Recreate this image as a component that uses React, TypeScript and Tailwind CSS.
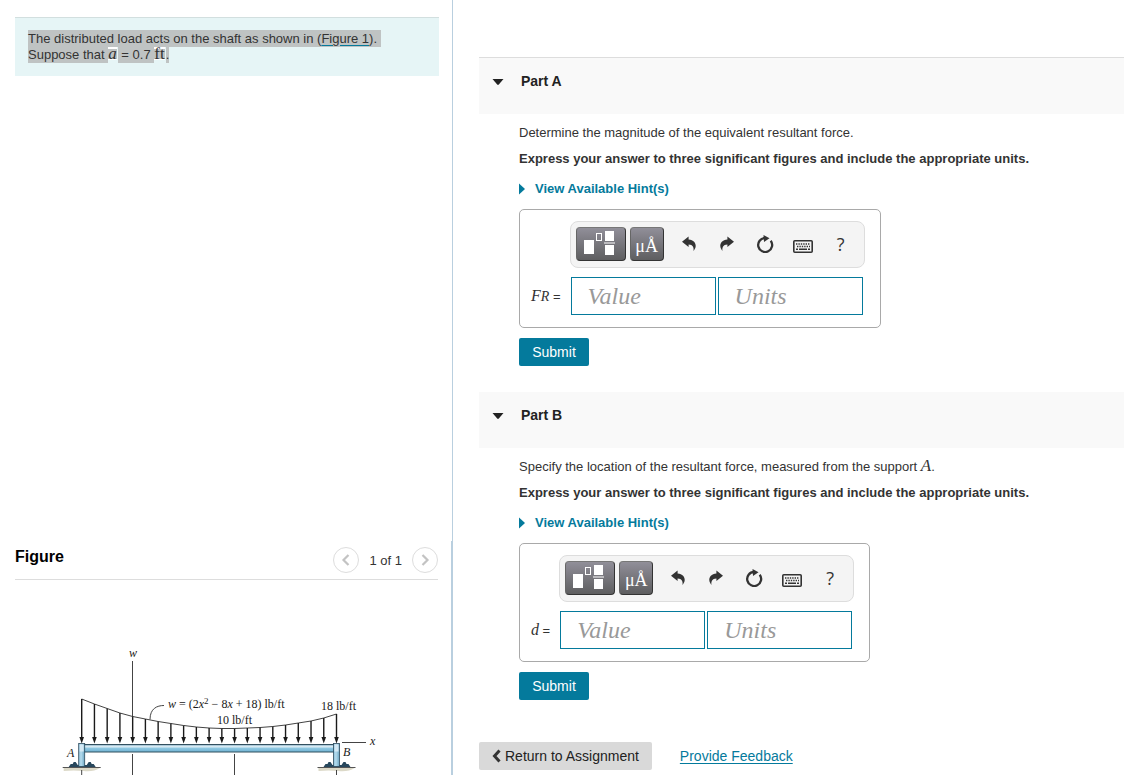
import { ReactNode } from "react";
import clsx from "clsx";

const SERIF = "font-['Liberation_Serif','Times_New_Roman',serif]";

function Marked({ children }: { children: ReactNode }) {
  return <span className="bg-[#bfc3c3] py-px">{children}</span>;
}

function MathMarked({ children }: { children: ReactNode }) {
  return (
    <span
      className={clsx(
        "mr-px inline-block border-t-2 border-b border-white bg-[#bfc3c3] text-[17px] leading-[10px]",
        SERIF
      )}
    >
      {children}
    </span>
  );
}

function Problem() {
  return (
    <section className="mt-[17px] mr-[13px] ml-[15px] h-[59px] border-t border-[#d2dfdf] bg-[#e6f5f6] px-[13px] pt-[13px] text-[13px] leading-4 text-[#333]">
      <p>
        <Marked>
          The distributed load acts on the shaft as shown in (
          <a href="#figure" className="underline decoration-[#047a9c] underline-offset-2">
            Figure 1
          </a>
          ).&nbsp;
        </Marked>
      </p>
      <p>
        <Marked>Suppose that </Marked>
        <MathMarked>
          <i>a</i>
        </MathMarked>
        <Marked> = 0.7 </Marked>
        <MathMarked>ft</MathMarked>
        <Marked>.</Marked>
      </p>
    </section>
  );
}

// top of every load arrow, left support to right support
const loadTops = [
  699, 704, 708.5, 713, 716.5, 719, 721.5, 723.5, 725.5, 727, 728, 728.5, 728.5,
  728, 727.5, 726.5, 725, 723, 721, 718, 714,
];
const loads = loadTops.map((y, i) => ({ x: 81.7 + i * 12.74, y }));

function Support({ x }: { x: number }) {
  return (
    <g>
      <path d={`M${x - 18} 768h36q-6 4-16 3t-20 0z`} fill="#dcd9c8" />
      <path
        d={`M${x - 13} 767l2-3h2l1-2h2l2 3h9l2-3h2l1 2h2l2 3z`}
        fill="#27475c"
      />
      <path d={`M${x - 19} 767.5h38`} stroke="#555" strokeWidth="1" />
      <rect x={x - 3} y="743.5" width="6" height="23" fill="url(#post)" stroke="#2c4a5c" strokeWidth="0.8" />
      <rect x={x - 2} y="744.5" width="4" height="7" fill="#d5e9f4" />
      <path d={`M${x} 770v5`} stroke="#444" strokeWidth="1" />
    </g>
  );
}

function BeamDiagram() {
  return (
    <svg
      viewBox="15 580 420 195"
      className="block h-[195px] w-[420px]"
      fontFamily="'Liberation Serif', serif"
      fontSize="12"
      fill="#1a1a1a"
    >
      <defs>
        <linearGradient id="beam" x1="0" y1="0" x2="0" y2="1">
          <stop offset="0" stopColor="#7fa9bf" />
          <stop offset="0.3" stopColor="#e3f2f9" />
          <stop offset="0.5" stopColor="#8fc8e2" />
          <stop offset="1" stopColor="#6fb2d2" />
        </linearGradient>
        <linearGradient id="post">
          <stop offset="0" stopColor="#8abdd6" />
          <stop offset="0.4" stopColor="#b5dcee" />
          <stop offset="1" stopColor="#6ba5c2" />
        </linearGradient>
      </defs>
      <g stroke="#444" strokeWidth="1" fill="none">
        <path d="M132.5 661v56M132.5 754v21M234.5 754v21M342 742.5h24" />
        <path d="M164 705.5c-7 0-14 3-14 14" />
        <polyline points={loads.map((p) => `${p.x},${p.y}`).join(" ")} />
      </g>
      {loads.map((p) => (
        <g key={p.x}>
          <path d={`M${p.x} ${p.y}V739`} stroke="#1a1a1a" strokeWidth="1.4" />
          <path d={`M${p.x - 2.3} 737h4.6l-2.3 6.5z`} />
        </g>
      ))}
      <rect x="82" y="744.5" width="254" height="7.5" fill="url(#beam)" stroke="#33505f" strokeWidth="1" />
      <Support x={81.7} />
      <Support x={336.5} />
      <text x="129" y="657" fontStyle="italic">w</text>
      <text x="168" y="708">
        <tspan fontStyle="italic">w</tspan> = (2<tspan fontStyle="italic">x</tspan>
        <tspan fontSize="9" dy="-4">2</tspan>
        <tspan dy="4"> − 8</tspan>
        <tspan fontStyle="italic">x</tspan> + 18) lb/ft
      </text>
      <text x="321" y="710">18 lb/ft</text>
      <text x="217" y="724">10 lb/ft</text>
      <text x="67" y="757" fontStyle="italic">A</text>
      <text x="343" y="756" fontStyle="italic">B</text>
      <text x="370" y="745" fontStyle="italic">x</text>
    </svg>
  );
}

function PagerButton({ label, d }: { label: string; d: string }) {
  return (
    <button
      aria-label={label}
      className="flex size-[26px] items-center justify-center rounded-full border border-[#ddd]"
    >
      <svg viewBox="0 0 10 14" className="h-[14px] w-[10px]" fill="none" stroke="#c3c3c3" strokeWidth="2.2">
        <path d={d} />
      </svg>
    </button>
  );
}

function Figure() {
  return (
    <section id="figure" className="border-r border-[#b9cfdf] pt-[6px] pr-[13px] pl-[15px]">
      <div className="flex h-[33px] items-start justify-between border-b border-[#ddd]">
        <h2 className="text-base leading-5 font-bold text-black">Figure</h2>
        <div className="flex items-center gap-[10px] text-[13px] text-[#333]">
          <PagerButton label="Previous figure" d="M7.5 2L2.5 7l5 5" />
          <span className="pt-[2px]">1 of 1</span>
          <PagerButton label="Next figure" d="M2.5 2l5 5l-5 5" />
        </div>
      </div>
      <BeamDiagram />
    </section>
  );
}

function ArrowIcon({ flip }: { flip?: boolean }) {
  return (
    <svg viewBox="0 0 14 16" className={clsx("h-4 w-[14px]", flip && "-scale-x-100")} fill="#333">
      <path d="M0 5.7L6.6.5v3C11.5 4 14 7 13.7 10.3c-.2 2-1.2 3.4-2.200 4.700C12 11.500 11 8.700 6.600 8.500v2.500z" />
    </svg>
  );
}

function ResetIcon() {
  return (
    <svg viewBox="0 0 18 18" className="size-[18px]" fill="none">
      <path d="M9 3a7 7 0 1 0 5.7 2.7" stroke="#333" strokeWidth="2.3" />
      <path d="M7.5 0l6 3.2l-5.5 3.8z" fill="#333" />
    </svg>
  );
}

function KeyboardIcon() {
  return (
    <svg viewBox="0 0 20 13" className="h-[13px] w-5" fill="none" stroke="#333">
      <rect x="0.8" y="0.8" width="18.4" height="11.4" rx="1" strokeWidth="1.6" />
      <path d="M3 4h14M4 6.5h13" strokeWidth="1.5" strokeDasharray="1.4 1" />
      <path d="M3 9.3h2M6 9.3h8M15 9.3h2" strokeWidth="1.5" />
    </svg>
  );
}

function TemplatesIcon() {
  return (
    <svg viewBox="0 0 32 26" className="h-[26px] w-8" fill="#fff">
      <rect x="1" y="10" width="10" height="14" />
      <rect x="13.5" y="3.5" width="5" height="7" fill="none" stroke="#fff" />
      <rect x="22" y="1" width="9" height="10" />
      <rect x="21" y="12.5" width="11" height="1" />
      <rect x="22" y="15" width="9" height="10" />
    </svg>
  );
}

const darkButton =
  "flex h-[34px] shrink-0 items-center justify-center rounded border border-t-[#777] border-l-[#666] border-r-[#333] border-b-[#333] bg-linear-to-b from-[#918f99] to-[#5e5e60] text-white";
const toolButton = "flex h-[34px] w-[38px] shrink-0 items-center justify-center text-[#333]";

function Toolbar() {
  return (
    <div className="flex h-[47px] w-[295px] items-start rounded-lg border border-[#ddd] bg-[#f4f4f4] pt-[5px] pr-1 pl-[5px]">
      <button aria-label="Templates" className={clsx(darkButton, "mr-1 w-[50px] pr-1 pb-[2px]")}>
        <TemplatesIcon />
      </button>
      <button
        aria-label="Symbols"
        className={clsx(darkButton, "mr-[6px] w-[34px] pt-1 text-[18px]", SERIF)}
      >
        μÅ
      </button>
      <button aria-label="Undo" className={toolButton}>
        <ArrowIcon />
      </button>
      <button aria-label="Redo" className={toolButton}>
        <ArrowIcon flip />
      </button>
      <button aria-label="Reset" className={toolButton}>
        <ResetIcon />
      </button>
      <button aria-label="Keyboard shortcuts" className={clsx(toolButton, "pt-1")}>
        <KeyboardIcon />
      </button>
      <button aria-label="Help" className={clsx(toolButton, "font-['Open_Sans',sans-serif] text-lg")}>
        ?
      </button>
    </div>
  );
}

function AnswerBox({ id, label }: { id: string; label: ReactNode }) {
  const field = clsx(
    "h-[38px] w-[145px] border border-[#047a9c] bg-white px-4 text-2xl italic outline-none placeholder:text-[#999]",
    SERIF
  );
  return (
    <div className="grid w-fit grid-cols-[auto_auto] gap-x-[9px] gap-y-[9px] rounded-[5px] border border-[#a9a9a9] pt-[11px] pr-[15px] pb-3 pl-[11px]">
      <div className="col-start-2">
        <Toolbar />
      </div>
      <label htmlFor={`${id}-value`} className="self-center text-[13px] text-[#333]">
        {label} =
      </label>
      <div className="flex gap-[2px] pl-px">
        <input id={`${id}-value`} placeholder="Value" className={field} />
        <input aria-label="Units" placeholder="Units" className={field} />
      </div>
    </div>
  );
}

type PartProps = {
  id: string;
  title: string;
  question: ReactNode;
  label: ReactNode;
  first?: boolean;
};

function Part({ id, title, question, label, first }: PartProps) {
  return (
    <section>
      <header
        className={clsx(
          "flex items-start gap-[17px] bg-[#f9f9f9] pt-[13px] pl-[13px]",
          first ? "h-[57px] border-t border-[#ddd]" : "h-14"
        )}
      >
        <svg viewBox="0 0 12 6" className="mt-2 h-[6px] w-3" fill="#222">
          <path d="M.5 0h11L6.8 5.5q-.8.8-1.6 0z" />
        </svg>
        <h2 className="text-sm leading-5 font-bold text-[#222]">{title}</h2>
      </header>
      <div className="pt-[9px] pb-[26px] pl-10 text-[13px] text-[#333]">
        <p className="leading-5">{question}</p>
        <p className="mt-[6px] leading-5 font-bold">
          Express your answer to three significant figures and include the appropriate units.
        </p>
        <button className="mt-[10px] mb-[10px] flex items-center gap-[10px] leading-5 font-bold text-[#047a9c]">
          <svg viewBox="0 0 6 12" className="h-3 w-[6px]" fill="#047a9c">
            <path d="M0 .5l6 5.5l-6 5.5z" />
          </svg>
          View Available Hint(s)
        </button>
        <AnswerBox id={id} label={label} />
        <button className="mt-[10px] block h-7 w-[70px] rounded-xs bg-[#047a9c] text-sm text-white">
          Submit
        </button>
      </div>
    </section>
  );
}

export default function App() {
  return (
    <div className="grid min-h-screen grid-cols-[453fr_671fr] overflow-hidden bg-white font-['Liberation_Sans',Arial,sans-serif]">
      <div className="flex flex-col justify-between border-r border-[#b9cfdf]">
        <Problem />
        <Figure />
      </div>
      <main className="pt-[57px] pl-[26px]">
        <Part
          first
          id="part-a"
          title="Part A"
          question="Determine the magnitude of the equivalent resultant force."
          label={
            <span className={clsx("text-base italic", SERIF)}>
              F<span className="text-sm">R</span>
            </span>
          }
        />
        <Part
          id="part-b"
          title="Part B"
          question={
            <>
              Specify the location of the resultant force, measured from the support{" "}
              <span className={clsx("text-[17px] leading-4 italic", SERIF)}>A</span>.
            </>
          }
          label={<span className={clsx("text-base italic", SERIF)}>d</span>}
        />
        <footer className="mt-4 flex items-center gap-7 pb-[5px] text-sm">
          <button className="flex h-7 items-center gap-1 rounded-xs bg-[#d9d9d9] px-[13px] text-[#222]">
            <svg viewBox="0 0 9 14" className="h-[14px] w-[9px]" fill="none" stroke="#333" strokeWidth="3">
              <path d="M7.5 1.5L2.5 7l5 5.5" />
            </svg>
            Return to Assignment
          </button>
          <a href="#feedback" className="text-[#047a9c] underline underline-offset-2">
            Provide Feedback
          </a>
        </footer>
      </main>
    </div>
  );
}
